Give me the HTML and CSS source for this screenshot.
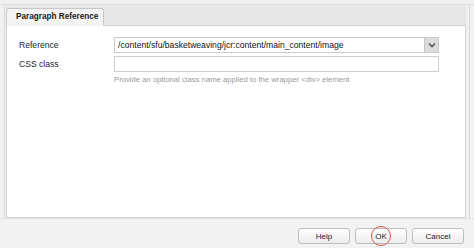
FILE: index.html
```html
<!DOCTYPE html>
<html>
<head>
<meta charset="utf-8">
<link rel="stylesheet" href="styles.css">
</head>
<body>
<div class="dialog">
  <div class="topstrip"></div>
  <div class="frame">
    <div class="tabbar">
      <div class="tab">Paragraph Reference</div>
    </div>
    <div class="panel">
      <div class="row">
        <div class="label">Reference</div>
        <div class="combo">
          <div class="combo-text">/content/sfu/basketweaving/jcr:content/main_content/image</div>
          <div class="trigger">
            <svg width="8" height="6" viewBox="0 0 8 6"><path d="M1 1.5 L4 4.5 L7 1.5" fill="none" stroke="#555" stroke-width="1.6"/></svg>
          </div>
        </div>
      </div>
      <div class="row">
        <div class="label">CSS class</div>
        <div class="field"></div>
      </div>
      <div class="hint">Provide an optional class name applied to the wrapper &lt;div&gt; element</div>
    </div>
  </div>
  <div class="footer">
    <button class="btn">Help</button>
    <button class="btn ok">OK<span class="circle"></span></button>
    <button class="btn">Cancel</button>
  </div>
</div>
</body>
</html>
```
FILE: styles.css
```css
html, body { margin: 0; padding: 0; }
body {
  width: 474px; height: 248px; overflow: hidden;
  background: #f1f1f1;
  font-family: "Liberation Sans", Tahoma, Arial, sans-serif;
  color: #222;
}
.dialog { display: flex; flex-direction: column; height: 248px; }
.topstrip { height: 4px; background: #efefef; border-bottom: 1px solid #dedede; }
.frame {
  margin: 0 4px 0 4px;
  border-left: 1px solid #d8d8d8;
  border-right: 1px solid #d8d8d8;
  padding: 0 3px 0 1px;
  display: flex; flex-direction: column;
}
.tabbar {
  height: 20px;
  background: #e7e7e7;
  border-bottom: 1px solid #cfcfcf;
  display: flex; align-items: flex-end;
}
.tab {
  height: 16px;
  margin-bottom: -1px;
  padding: 0 6px 0 9px;
  width: 81px;
  background: #f4f4f4;
  border: 1px solid #c8c8c8;
  border-bottom: 1px solid #f4f4f4;
  border-radius: 3px 3px 0 0;
  font-weight: bold;
  font-size: 8.2px;
  line-height: 16px;
  color: #1a1a1a;
  white-space: nowrap;
}
.panel {
  height: 192px;
  background: #fff;
  border: 1px solid #d2d2d2;
  border-top: none;
  padding: 11px 26px 0 12px;
  box-sizing: border-box;
}
.row { display: flex; align-items: center; height: 16px; margin-bottom: 3px; }
.label { width: 95px; font-size: 8.6px; color: #222; }
.combo {
  flex: 1; height: 16px; box-sizing: border-box;
  border: 1px solid #c9c9c9;
  display: flex; align-items: center;
  background: #fff;
}
.combo-text { flex: 1; font-size: 8.6px; padding-left: 3px; color: #111; white-space: nowrap; overflow: hidden; }
.trigger {
  width: 13px; height: 14px; background: #dcdcdc;
  border-left: 1px solid #c6c6c6;
  display: flex; align-items: center; justify-content: center;
}
.field { flex: 1; height: 16px; box-sizing: border-box; border: 1px solid #cfcfcf; background: #fff; }
.hint { margin-left: 95px; margin-top: 3px; font-size: 7.7px; color: #999; }
.footer {
  flex: 1;
  background: #f2f2f2;
  border-top: 1px solid #e2e2e2;
  display: flex; justify-content: flex-end; align-items: center;
  gap: 5px;
  padding: 5px 10px 0 0;
}
.btn {
  width: 52px; height: 16px;
  border: 1px solid #bdbdbd;
  border-radius: 3px;
  background: linear-gradient(#ffffff, #ececec);
  font-family: "Liberation Sans", Tahoma, Arial, sans-serif;
  font-size: 8px; color: #222;
  padding: 0;
  position: relative;
}
.circle {
  position: absolute;
  left: 15px; top: -3px;
  width: 20px; height: 20px;
  border: 1px solid #d9534f;
  border-radius: 50%;
  box-sizing: border-box;
}
```
